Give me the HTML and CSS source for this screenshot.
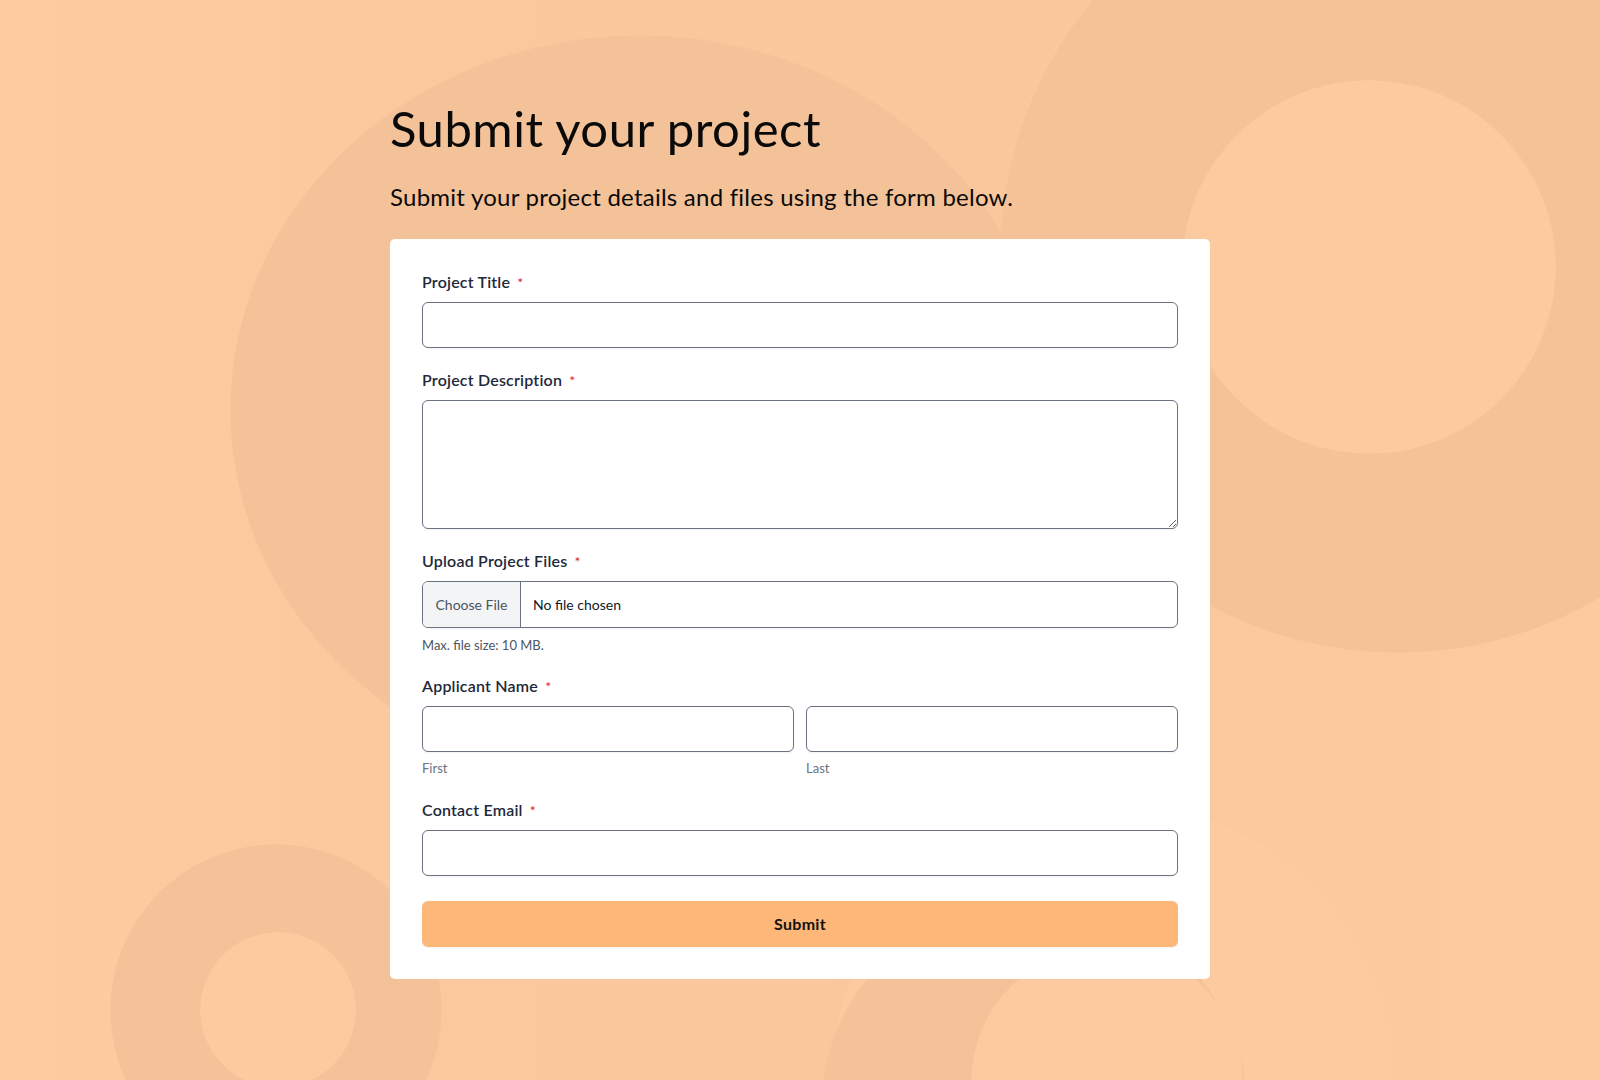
FILE: index.html
```html
<!DOCTYPE html>
<html lang="en">
<head>
<meta charset="utf-8">
<title>Submit your project</title>
<link rel="stylesheet" href="styles.css">
</head>
<body>
<main class="page">
  <h1 class="title">Submit your project</h1>
  <p class="lead">Submit your project details and files using the form below.</p>
  <form class="card">
    <div class="field">
      <label class="label" for="title">Project Title <span class="req">*</span></label>
      <input class="input" id="title" type="text">
    </div>
    <div class="field">
      <label class="label" for="desc">Project Description <span class="req">*</span></label>
      <textarea class="input textarea" id="desc"></textarea>
    </div>
    <div class="field">
      <span class="label">Upload Project Files <span class="req">*</span></span>
      <label class="file">
        <span class="file-btn">Choose File</span>
        <span class="file-name">No file chosen</span>
        <input class="file-input" type="file">
      </label>
      <p class="help">Max. file size: 10 MB.</p>
    </div>
    <div class="field">
      <span class="label">Applicant Name <span class="req">*</span></span>
      <div class="name-row">
        <div class="name-col">
          <input class="input" type="text" aria-label="First">
          <span class="sub">First</span>
        </div>
        <div class="name-col">
          <input class="input" type="text" aria-label="Last">
          <span class="sub">Last</span>
        </div>
      </div>
    </div>
    <div class="field">
      <label class="label" for="email">Contact Email <span class="req">*</span></label>
      <input class="input" id="email" type="email">
    </div>
    <button class="submit" type="submit">Submit</button>
  </form>
</main>
</body>
</html>
```

FILE: styles.css
```css
html, body {
  margin: 0;
  padding: 0;
}

body {
  min-height: 1080px;
  overflow: hidden;
  font-family: Lato, "Open Sans", sans-serif;
  background-color: #fac89c;
  background-image:
    radial-gradient(circle 187px at 1369px 267px, #fbcb9f 99.6%, rgba(251,203,159,0) 100%),
    radial-gradient(circle 398px at 1398px 255px, #f5c298 99.8%, rgba(245,194,152,0) 100%),
    radial-gradient(ellipse 410px 375px at 640px 410px, #f4c298 99.8%, rgba(244,194,152,0) 100%),
    radial-gradient(circle 78px at 278px 1010px, #fbcb9f 99.2%, rgba(251,203,159,0) 100%),
    radial-gradient(circle 166px at 276px 1010px, #f4c298 99.5%, rgba(244,194,152,0) 100%),
    radial-gradient(circle 136px at 1107px 1082px, #fbcb9f 99.3%, rgba(251,203,159,0) 100%),
    radial-gradient(circle 214px at 1034px 1112px, #f4c298 99.5%, rgba(244,194,152,0) 100%),
    radial-gradient(circle 281px at 1112px 1082px, #fbcb9f 99.6%, rgba(251,203,159,0) 100%),
    linear-gradient(90deg, #fccb9f 0%, #fac89c 30%, #f9c79b 60%, #fbca9e 100%);
  background-repeat: no-repeat;
}

.page {
  width: 820px;
  margin: 0 auto;
  padding-top: 99px;
}

.title {
  margin: 0;
  font-size: 49px;
  line-height: 1.2;
  font-weight: 400;
  letter-spacing: 0.5px;
  color: #0a0a0a;
}

.lead {
  margin: 25px 0 27px;
  font-size: 24px;
  line-height: 1.2;
  letter-spacing: 0.24px;
  color: #0a0a0a;
}

.card {
  background: #ffffff;
  border-radius: 5px;
  padding: 31px 32px 32px;
}

.field + .field {
  margin-top: 20px;
}

.label {
  display: block;
  margin-bottom: 7px;
  font-size: 16px;
  line-height: 24px;
  font-weight: 600;
  letter-spacing: 0.2px;
  color: #1e293b;
}

.req {
  margin-left: 3px;
  font-size: 14px;
  font-weight: 400;
  color: #dc2626;
}

.input {
  display: block;
  width: 100%;
  height: 46px;
  box-sizing: border-box;
  margin: 0;
  padding: 0 12px;
  border: 1px solid #6b7280;
  border-radius: 6px;
  background: #ffffff;
  box-shadow: 0 1px 2px rgba(0, 0, 0, 0.05);
  font-family: inherit;
  font-size: 14px;
  color: #111827;
}

.textarea {
  height: 129px;
  padding: 10px 12px;
  resize: vertical;
}

.file {
  display: flex;
  height: 47px;
  box-sizing: border-box;
  border: 1px solid #6b7280;
  border-radius: 6px;
  overflow: hidden;
  box-shadow: 0 1px 2px rgba(0, 0, 0, 0.05);
}

.file-btn {
  display: flex;
  align-items: center;
  justify-content: center;
  width: 97px;
  background: #f3f4f6;
  border-right: 1px solid #6b7280;
  font-size: 14px;
  color: #4b5563;
}

.file-name {
  display: flex;
  align-items: center;
  padding-left: 12px;
  font-size: 14px;
  color: #111827;
}

.file-input {
  display: none;
}

.help {
  margin: 8px 0 0;
  font-size: 13px;
  line-height: 18px;
  color: #4b5563;
}

.name-row {
  display: grid;
  grid-template-columns: 1fr 1fr;
  gap: 12px;
}

.sub {
  display: block;
  margin-top: 7px;
  font-size: 13px;
  line-height: 19px;
  color: #6b7280;
}

.submit {
  display: block;
  width: 100%;
  height: 46px;
  margin-top: 25px;
  border: none;
  border-radius: 6px;
  background: #fdb778;
  box-shadow: 0 1px 2px rgba(0, 0, 0, 0.05);
  font-family: inherit;
  font-size: 16px;
  font-weight: 700;
  letter-spacing: 0.3px;
  color: #111111;
  cursor: pointer;
}
```
